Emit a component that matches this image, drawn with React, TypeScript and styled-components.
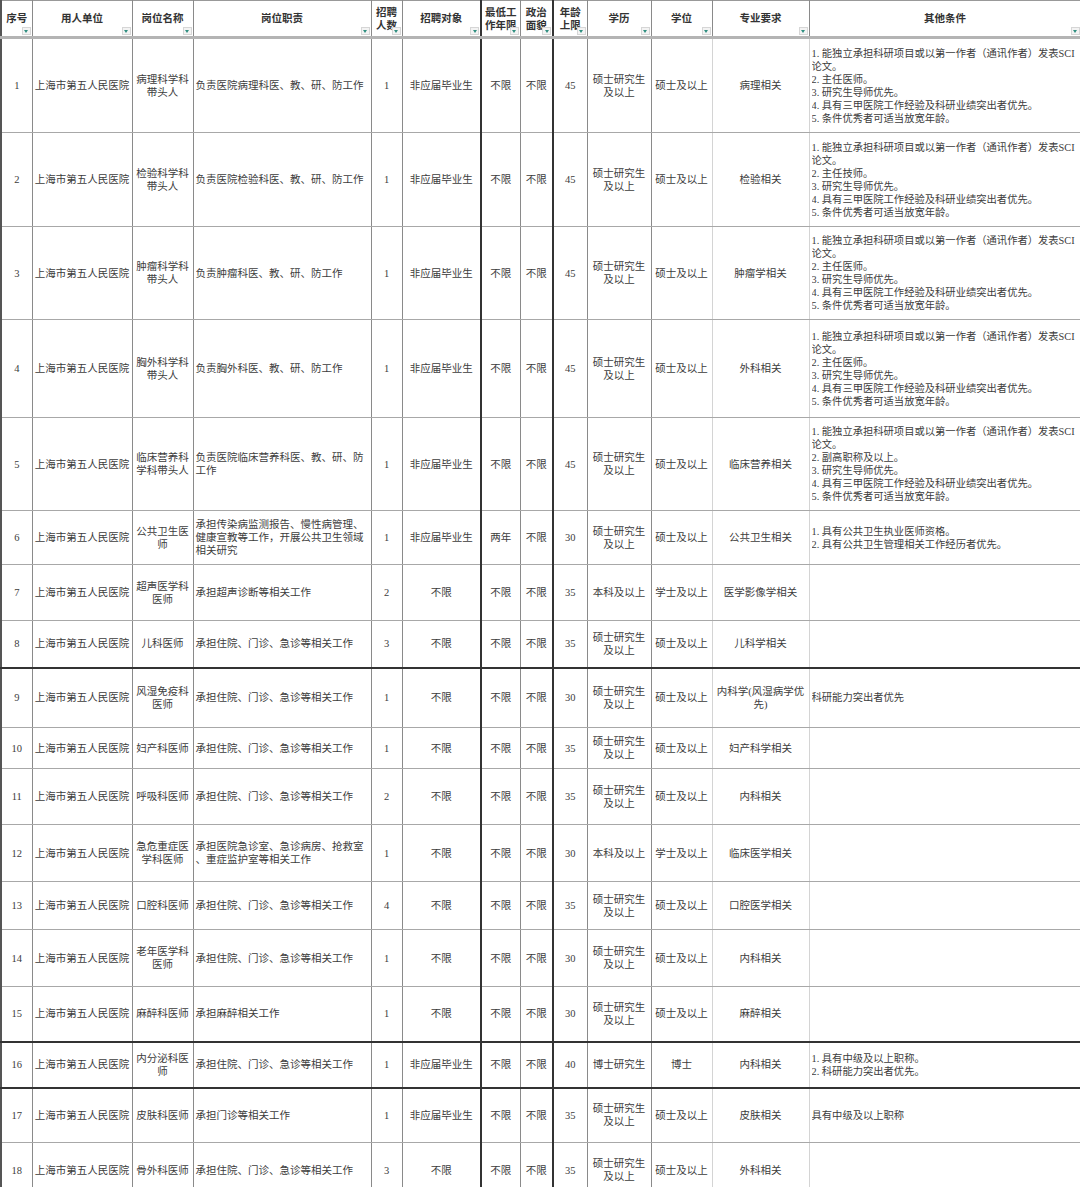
import styled, { createGlobalStyle, css } from "styled-components";

const GlobalStyle = createGlobalStyle`
  html, body {
    margin: 0;
    padding: 0;
    background: #ffffff;
  }
  #root {
    height: 1187px;
    overflow: hidden;
  }
`;

const FONT = `"Liberation Serif", "Noto Sans CJK SC", serif`;

const Sheet = styled.table`
  width: 1080px;
  table-layout: fixed;
  border-collapse: collapse;
  font-family: ${FONT};
  font-size: 10.5px;
  line-height: 13px;
  color: #3c3c3c;
  border-left: 2px solid #555;
  border-top: 1px solid #999;
`;

const HeadRow = styled.tr`
  height: 37px;
`;

const HeadCell = styled.th<{ $heavy?: boolean }>`
  position: relative;
  padding: 0 2px;
  font-weight: bold;
  color: #333;
  text-align: center;
  vertical-align: middle;
  border-right: ${(p) => (p.$heavy ? "2px solid #333" : "1px solid #8a8a8a")};
  border-bottom: 3px solid #b4b4b4;
`;

const Filter = styled.span`
  position: absolute;
  right: 1px;
  bottom: 1px;
  width: 9px;
  height: 8px;
  box-sizing: border-box;
  border: 1px solid #d6d6d6;
  background: #f3f3f3;
  display: flex;
  align-items: center;
  justify-content: center;
  &::after {
    content: "";
    border-left: 2px solid transparent;
    border-right: 2px solid transparent;
    border-top: 3px solid #2f8f80;
  }
`;

const BodyRow = styled.tr<{ $h: number; $thick?: boolean }>`
  height: ${(p) => p.$h}px;
  ${(p) =>
    p.$thick &&
    css`
      & > td {
        border-bottom: 2px solid #333;
      }
    `}
`;

const Cell = styled.td<{ $left?: boolean; $heavy?: boolean; $light?: boolean }>`
  padding: 0 2px;
  text-align: ${(p) => (p.$left ? "left" : "center")};
  vertical-align: middle;
  line-break: anywhere;
  border-bottom: 1px solid #a8a8a8;
  border-right: ${(p) =>
    p.$heavy ? "2px solid #333" : p.$light ? "1px solid #d4d4d4" : "1px solid #8a8a8a"};
`;

const Line = styled.div`
  white-space: nowrap;
  overflow: hidden;
  font-size: 10.3px;
`;

const widths = [31, 100, 61, 178, 31, 79, 39, 33, 34, 64, 61, 97, 272];

type Row = {
  name: string;
  duty: string;
  count: number;
  target: string;
  years: string;
  age: number;
  edu: string;
  degree: string;
  major: string;
  other: string[];
  h: number;
  thick?: boolean;
};

const leader = (second: string) => [
  "1. 能独立承担科研项目或以第一作者（通讯作者）发表SCI",
  "论文。",
  `2. ${second}`,
  "3. 研究生导师优先。",
  "4. 具有三甲医院工作经验及科研业绩突出者优先。",
  "5. 条件优秀者可适当放宽年龄。",
];

const MASTER = "硕士研究生及以上";
const MDEG = "硕士及以上";
const WARD = "承担住院、门诊、急诊等相关工作";

const rows: Row[] = [
  { name: "病理科学科带头人", duty: "负责医院病理科医、教、研、防工作", count: 1, target: "非应届毕业生", years: "不限", age: 45, edu: MASTER, degree: MDEG, major: "病理相关", other: leader("主任医师。"), h: 95 },
  { name: "检验科学科带头人", duty: "负责医院检验科医、教、研、防工作", count: 1, target: "非应届毕业生", years: "不限", age: 45, edu: MASTER, degree: MDEG, major: "检验相关", other: leader("主任技师。"), h: 94 },
  { name: "肿瘤科学科带头人", duty: "负责肿瘤科医、教、研、防工作", count: 1, target: "非应届毕业生", years: "不限", age: 45, edu: MASTER, degree: MDEG, major: "肿瘤学相关", other: leader("主任医师。"), h: 93 },
  { name: "胸外科学科带头人", duty: "负责胸外科医、教、研、防工作", count: 1, target: "非应届毕业生", years: "不限", age: 45, edu: MASTER, degree: MDEG, major: "外科相关", other: leader("主任医师。"), h: 98 },
  { name: "临床营养科学科带头人", duty: "负责医院临床营养科医、教、研、防工作", count: 1, target: "非应届毕业生", years: "不限", age: 45, edu: MASTER, degree: MDEG, major: "临床营养相关", other: leader("副高职称及以上。"), h: 93 },
  { name: "公共卫生医师", duty: "承担传染病监测报告、慢性病管理、健康宣教等工作，开展公共卫生领域相关研究", count: 1, target: "非应届毕业生", years: "两年", age: 30, edu: MASTER, degree: MDEG, major: "公共卫生相关", other: ["1. 具有公共卫生执业医师资格。", "2. 具有公共卫生管理相关工作经历者优先。"], h: 54 },
  { name: "超声医学科医师", duty: "承担超声诊断等相关工作", count: 2, target: "不限", years: "不限", age: 35, edu: "本科及以上", degree: "学士及以上", major: "医学影像学相关", other: [], h: 56 },
  { name: "儿科医师", duty: WARD, count: 3, target: "不限", years: "不限", age: 35, edu: MASTER, degree: MDEG, major: "儿科学相关", other: [], h: 47, thick: true },
  { name: "风湿免疫科医师", duty: WARD, count: 1, target: "不限", years: "不限", age: 30, edu: MASTER, degree: MDEG, major: "内科学(风湿病学优先)", other: ["科研能力突出者优先"], h: 60 },
  { name: "妇产科医师", duty: WARD, count: 1, target: "不限", years: "不限", age: 35, edu: MASTER, degree: MDEG, major: "妇产科学相关", other: [], h: 41 },
  { name: "呼吸科医师", duty: WARD, count: 2, target: "不限", years: "不限", age: 35, edu: MASTER, degree: MDEG, major: "内科相关", other: [], h: 56 },
  { name: "急危重症医学科医师", duty: "承担医院急诊室、急诊病房、抢救室、重症监护室等相关工作", count: 1, target: "不限", years: "不限", age: 30, edu: "本科及以上", degree: "学士及以上", major: "临床医学相关", other: [], h: 57 },
  { name: "口腔科医师", duty: WARD, count: 4, target: "不限", years: "不限", age: 35, edu: MASTER, degree: MDEG, major: "口腔医学相关", other: [], h: 48 },
  { name: "老年医学科医师", duty: WARD, count: 1, target: "不限", years: "不限", age: 30, edu: MASTER, degree: MDEG, major: "内科相关", other: [], h: 57 },
  { name: "麻醉科医师", duty: "承担麻醉相关工作", count: 1, target: "不限", years: "不限", age: 30, edu: MASTER, degree: MDEG, major: "麻醉相关", other: [], h: 55, thick: true },
  { name: "内分泌科医师", duty: WARD, count: 1, target: "非应届毕业生", years: "不限", age: 40, edu: "博士研究生", degree: "博士", major: "内科相关", other: ["1. 具有中级及以上职称。", "2. 科研能力突出者优先。"], h: 46, thick: true },
  { name: "皮肤科医师", duty: "承担门诊等相关工作", count: 1, target: "非应届毕业生", years: "不限", age: 35, edu: MASTER, degree: MDEG, major: "皮肤相关", other: ["具有中级及以上职称"], h: 55 },
  { name: "骨外科医师", duty: WARD, count: 3, target: "不限", years: "不限", age: 35, edu: MASTER, degree: MDEG, major: "外科相关", other: [], h: 55 },
];

const headers: { label: React.ReactNode; heavy?: boolean }[] = [
  { label: "序号" },
  { label: "用人单位" },
  { label: "岗位名称" },
  { label: "岗位职责" },
  { label: <>招聘<br />人数</> },
  { label: "招聘对象", heavy: true },
  { label: <>最低工<br />作年限</> },
  { label: <>政治<br />面貌</>, heavy: true },
  { label: <>年龄<br />上限</> },
  { label: "学历" },
  { label: "学位" },
  { label: "专业要求" },
  { label: "其他条件" },
];

export default function App() {
  return (
    <>
      <GlobalStyle />
      <Sheet>
        <colgroup>
          {widths.map((w, i) => (
            <col key={i} style={{ width: w }} />
          ))}
        </colgroup>
        <thead>
          <HeadRow>
            {headers.map((h, i) => (
              <HeadCell key={i} $heavy={h.heavy}>
                {h.label}
                <Filter />
              </HeadCell>
            ))}
          </HeadRow>
        </thead>
        <tbody>
          {rows.map((r, i) => (
            <BodyRow key={i} $h={r.h} $thick={r.thick}>
              <Cell>{i + 1}</Cell>
              <Cell>上海市第五人民医院</Cell>
              <Cell>{r.name}</Cell>
              <Cell $left>{r.duty}</Cell>
              <Cell>{r.count}</Cell>
              <Cell $heavy>{r.target}</Cell>
              <Cell>{r.years}</Cell>
              <Cell $heavy>不限</Cell>
              <Cell>{r.age}</Cell>
              <Cell>{r.edu}</Cell>
              <Cell $light>{r.degree}</Cell>
              <Cell $light>{r.major}</Cell>
              <Cell $left>
                {r.other.map((l, j) => (
                  <Line key={j}>{l}</Line>
                ))}
              </Cell>
            </BodyRow>
          ))}
        </tbody>
      </Sheet>
    </>
  );
}
